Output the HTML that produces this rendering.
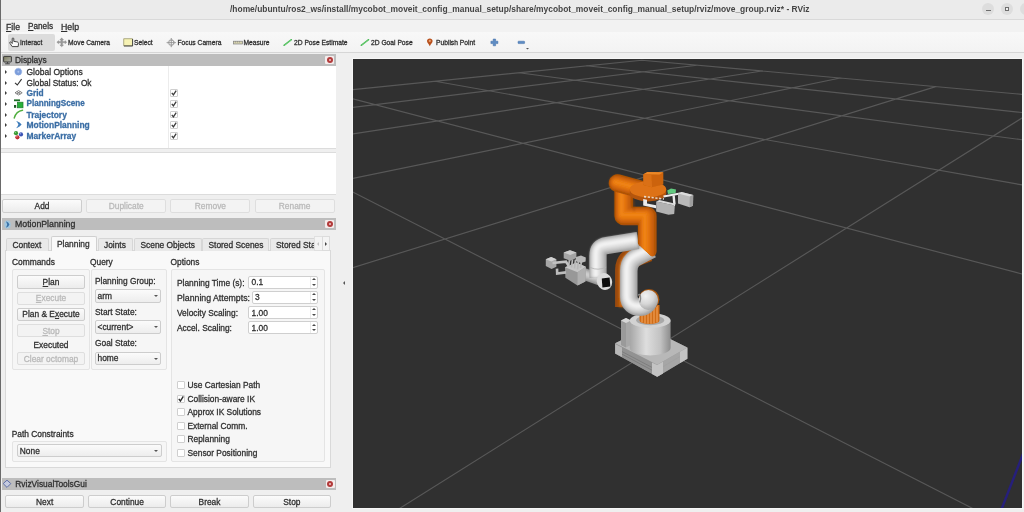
<!DOCTYPE html><html lang="en"><head><meta charset="utf-8"><title>RViz</title><style>
html,body{margin:0;padding:0}
body{width:1024px;height:512px;overflow:hidden;background:#efefef;position:relative;
 font-family:"Liberation Sans","DejaVu Sans",sans-serif;font-size:8.4px;color:#2f2f2f;line-height:1}
#root{position:absolute;left:0;top:0;width:1024px;height:512px;overflow:hidden;will-change:transform;transform:translateZ(0)}
.a{position:absolute;white-space:nowrap}
.t{position:absolute;white-space:nowrap;line-height:10px;height:10px;-webkit-text-stroke:0.28px currentColor}
.tb{font-size:6.7px}
.hdr{position:absolute;background:#bdbdbd;left:2px;width:334px}
.btn{position:absolute;box-sizing:border-box;border:1px solid #cdcdcd;border-radius:2px;
 background:linear-gradient(#fbfbfb,#ececec);text-align:center}
.btn.dis{color:#b9b9b9;background:#f3f3f3;border-color:#dedede}
.grp{position:absolute;box-sizing:border-box;border:1px solid #e4e4e4;border-radius:2px;background:#f6f6f6}
.inp{position:absolute;box-sizing:border-box;border:1px solid #cfcfcf;border-radius:2px;background:#fff}
.cmb{position:absolute;box-sizing:border-box;border:1px solid #cdcdcd;border-radius:2px;background:linear-gradient(#fbfbfb,#ededed)}
.cb{position:absolute;box-sizing:border-box;width:8px;height:8px;border:1px solid #cfcfcf;border-radius:1px;background:#fff}
.blue{color:#3b6ea5;font-weight:700}
.tab{position:absolute;box-sizing:border-box;border:1px solid #d6d6d6;border-bottom:none;background:#e9e9e9;border-radius:2px 2px 0 0}
.cls{position:absolute;width:9px;height:8px;background:#f4ecec;border-radius:1px}
.cls i{position:absolute;left:1.5px;top:1px;width:6px;height:6px;border-radius:3px;background:#b23a3a}
.cls b{position:absolute;left:3.5px;top:3px;width:2px;height:2px;border-radius:1px;background:#f1c9c9}
</style></head><body><div id="root">
<div class="a" style="left:0;top:0;width:1024px;height:19px;background:#ebebeb;border-bottom:1px solid #d9d9d9"></div>
<div class="t" style="left:230px;top:4.1px;font-weight:700;font-size:8.43px;color:#454545;-webkit-text-stroke:0">/home/ubuntu/ros2_ws/install/mycobot_moveit_config_manual_setup/share/mycobot_moveit_config_manual_setup/rviz/move_group.rviz* - RViz</div>
<div class="a" style="left:982px;top:3px;width:12px;height:12px;border-radius:6px;background:#dddddd"></div>
<div class="a" style="left:1001px;top:3px;width:12px;height:12px;border-radius:6px;background:#dddddd"></div>
<div class="a" style="left:1020px;top:3px;width:12px;height:12px;border-radius:6px;background:#dddddd"></div>
<div class="a" style="left:985.5px;top:10px;width:5px;height:1px;background:#6e6e6e"></div>
<div class="a" style="left:1004.5px;top:7px;width:4px;height:4px;border:1px solid #6e6e6e;box-sizing:border-box;background:#eee"></div>
<div class="a" style="left:0;top:20px;width:1024px;height:12px;background:#f2f2f2"></div>
<div class="t " style="left:6px;top:22.00px;font-size:8.7px"><u>F</u>ile</div>
<div class="t " style="left:28px;top:22.00px;font-size:8.2px"><u>P</u>anels</div>
<div class="t " style="left:61px;top:22.00px;font-size:8.75px"><u>H</u>elp</div>
<div class="a" style="left:0;top:32px;width:1024px;height:20px;background:linear-gradient(#f8f8f8,#f3f3f3);border-bottom:1px solid #d6d6d6"></div>
<div class="a" style="left:8px;top:34px;width:47px;height:17px;background:#dcdcdc;border-radius:2px"></div>
<div class="t tb" style="left:20px;top:37.60px;">Interact</div>
<div class="t tb" style="left:68px;top:37.60px;">Move Camera</div>
<div class="t tb" style="left:134px;top:37.60px;">Select</div>
<div class="t tb" style="left:177.5px;top:37.60px;">Focus Camera</div>
<div class="t tb" style="left:243.5px;top:37.60px;">Measure</div>
<div class="t tb" style="left:294px;top:37.60px;">2D Pose Estimate</div>
<div class="t tb" style="left:371px;top:37.60px;">2D Goal Pose</div>
<div class="t tb" style="left:436px;top:37.60px;">Publish Point</div>
<svg class="a" style="left:0;top:32px" width="540" height="21" viewBox="0 32 540 21">
<path d="M12.2 46.6 L10 43.4 C9.2 42.2 10.4 41.4 11.3 42.4 L12.2 43.5 L12.2 38.8 C12.2 37.6 13.8 37.6 13.8 38.8 L13.8 41.4 L16.8 41.8 C18 42 18.5 42.6 18.5 43.6 L18.2 46.6Z" fill="#fafafa" stroke="#333" stroke-width=".9" stroke-linejoin="round"/>
<path d="M61.7 37.8 L63.6 40 L62.5 40 L62.5 41.6 L65 41.6 L65 40.6 L66.8 42.2 L65 43.8 L65 42.8 L62.5 42.8 L62.5 45 L63.6 45 L61.7 46.8 L59.8 45 L60.9 45 L60.9 42.8 L58.6 42.8 L58.6 43.8 L56.8 42.2 L58.6 40.6 L58.6 41.6 L60.9 41.6 L60.9 40 L59.8 40Z" fill="#9a9a9a" stroke="#777" stroke-width=".3"/>
<rect x="123.8" y="38.8" width="8.6" height="7" fill="#f6f2b4" stroke="#8e8a5a" stroke-width=".7"/>
<path d="M124 46 L132.6 46 L132.6 39" fill="none" stroke="#3f3f3f" stroke-width=".9"/>
<g stroke="#8a8a8a" fill="none" stroke-width=".8"><circle cx="171.3" cy="42.6" r="2.6"/><path d="M171.3 38 V47.2 M166.7 42.6 H175.9"/><path d="M171.3 38.4 L175.5 42.6 L171.3 46.8 L167.1 42.6Z" stroke="#aaa" stroke-width=".5"/></g>
<rect x="233.4" y="41.2" width="9.2" height="2.8" fill="#d8d4b0" stroke="#808080" stroke-width=".7"/>
<path d="M235.5 41.2 v1.4 M237.5 41.2 v1.4 M239.5 41.2 v1.4" stroke="#777" stroke-width=".5"/>
<path d="M284 45.4 L291.4 39.6" stroke="#46b854" stroke-width="1.35" stroke-linecap="round"/>
<path d="M284.6 45.2 L291 40.2" stroke="#8fe08f" stroke-width=".5"/>
<path d="M361.2 45.4 L368.59999999999997 39.6" stroke="#46b854" stroke-width="1.35" stroke-linecap="round"/>
<path d="M361.8 45.2 L368.2 40.2" stroke="#8fe08f" stroke-width=".5"/>
<path d="M429.8 46.2 C428.6 43.4 427 42.6 427 40.9 C427 39.5 428.2 38.5 429.8 38.5 C431.4 38.5 432.6 39.5 432.6 40.9 C432.6 42.6 431 43.4 429.8 46.2Z" fill="#b8501c"/>
<circle cx="429.8" cy="40.9" r="1.1" fill="#e8a070"/>
<path d="M493.2 39 h2.4 v2.2 h2.3 v2.4 h-2.3 v2.2 h-2.4 v-2.2 h-2.3 v-2.4 h2.3Z" fill="#5e8cc4" stroke="#3c6aa4" stroke-width=".5"/>
<rect x="518" y="41.2" width="6.6" height="2.4" rx=".6" fill="#5e8cc4" stroke="#3c6aa4" stroke-width=".5"/>
<path d="M526 48 h3 l-1.5 1.6Z" fill="#555"/>
</svg>
<div class="a" style="left:0;top:0;width:1px;height:512px;background:#6a6a6a"></div>
<div class="hdr" style="top:54px;height:11.5px"></div>
<div class="t " style="left:15px;top:55.30px;">Displays</div>
<div class="cls" style="left:325px;top:55.5px"><i></i><b></b></div>
<div class="a" style="left:1px;top:65.5px;width:335px;height:82.5px;background:#fff;border-bottom:1px solid #dcdcdc"></div>
<div class="a" style="left:168px;top:66px;width:1px;height:82px;background:#ececec"></div>
<div class="t " style="left:26.5px;top:67.00px;font-size:8.5px">Global Options</div>
<div class="a" style="left:5.2px;top:70.0px;width:0;height:0;border-left:2.6px solid #3c3c3c;border-top:2px solid transparent;border-bottom:2px solid transparent"></div>
<div class="t " style="left:26.5px;top:77.70px;font-size:8.3px">Global Status: Ok</div>
<div class="a" style="left:5.2px;top:80.7px;width:0;height:0;border-left:2.6px solid #3c3c3c;border-top:2px solid transparent;border-bottom:2px solid transparent"></div>
<div class="t blue" style="left:26.5px;top:88.30px;font-size:8.35px">Grid</div>
<div class="a" style="left:5.2px;top:91.3px;width:0;height:0;border-left:2.6px solid #3c3c3c;border-top:2px solid transparent;border-bottom:2px solid transparent"></div>
<div class="cb" style="left:170px;top:89.3px;width:7.5px;height:7.5px"></div>
<svg class="a" style="left:170px;top:89.3px" width="8" height="8" viewBox="0 0 8 8"><path d="M1.8 3.8 L3.4 5.8 L6.2 1.6" fill="none" stroke="#3c3c3c" stroke-width="1.3"/></svg>
<div class="t blue" style="left:26.5px;top:99.10px;font-size:8.15px">PlanningScene</div>
<div class="a" style="left:5.2px;top:102.1px;width:0;height:0;border-left:2.6px solid #3c3c3c;border-top:2px solid transparent;border-bottom:2px solid transparent"></div>
<div class="cb" style="left:170px;top:100.1px;width:7.5px;height:7.5px"></div>
<svg class="a" style="left:170px;top:100.1px" width="8" height="8" viewBox="0 0 8 8"><path d="M1.8 3.8 L3.4 5.8 L6.2 1.6" fill="none" stroke="#3c3c3c" stroke-width="1.3"/></svg>
<div class="t blue" style="left:26.5px;top:109.80px;font-size:8.45px">Trajectory</div>
<div class="a" style="left:5.2px;top:112.8px;width:0;height:0;border-left:2.6px solid #3c3c3c;border-top:2px solid transparent;border-bottom:2px solid transparent"></div>
<div class="cb" style="left:170px;top:110.8px;width:7.5px;height:7.5px"></div>
<svg class="a" style="left:170px;top:110.8px" width="8" height="8" viewBox="0 0 8 8"><path d="M1.8 3.8 L3.4 5.8 L6.2 1.6" fill="none" stroke="#3c3c3c" stroke-width="1.3"/></svg>
<div class="t blue" style="left:26.5px;top:120.30px;font-size:8.45px">MotionPlanning</div>
<div class="a" style="left:5.2px;top:123.3px;width:0;height:0;border-left:2.6px solid #3c3c3c;border-top:2px solid transparent;border-bottom:2px solid transparent"></div>
<div class="cb" style="left:170px;top:121.3px;width:7.5px;height:7.5px"></div>
<svg class="a" style="left:170px;top:121.3px" width="8" height="8" viewBox="0 0 8 8"><path d="M1.8 3.8 L3.4 5.8 L6.2 1.6" fill="none" stroke="#3c3c3c" stroke-width="1.3"/></svg>
<div class="t blue" style="left:26.5px;top:131.00px;font-size:8.45px">MarkerArray</div>
<div class="a" style="left:5.2px;top:134.0px;width:0;height:0;border-left:2.6px solid #3c3c3c;border-top:2px solid transparent;border-bottom:2px solid transparent"></div>
<div class="cb" style="left:170px;top:132.0px;width:7.5px;height:7.5px"></div>
<svg class="a" style="left:170px;top:132.0px" width="8" height="8" viewBox="0 0 8 8"><path d="M1.8 3.8 L3.4 5.8 L6.2 1.6" fill="none" stroke="#3c3c3c" stroke-width="1.3"/></svg>
<svg class="a" style="left:0;top:54px" width="26" height="90" viewBox="0 54 26 90">
<defs><linearGradient id="mon" x1="0" y1="0" x2="1" y2="1"><stop offset="0" stop-color="#7a7a58"/><stop offset="1" stop-color="#b4b4b4"/></linearGradient></defs>
<rect x="3.6" y="56.4" width="7.8" height="5.6" rx=".6" fill="url(#mon)" stroke="#2e2e2e" stroke-width=".9"/>
<path d="M7.5 62.2 v1.2 M5.2 63.8 h4.6" stroke="#2e2e2e" stroke-width=".9"/>
<circle cx="18.3" cy="71.7" r="3.5" fill="#7d9edb"/><circle cx="18.3" cy="71.7" r="3.5" fill="none" stroke="#9bb5e6" stroke-width=".8" stroke-dasharray="1.1 1.1"/><circle cx="18.3" cy="71.7" r="1" fill="#a9c0ec"/>
<path d="M15 82.8 L17.3 85 L21.6 79.2" fill="none" stroke="#333" stroke-width="1.1"/>
<g stroke="#555" stroke-width=".7" fill="none"><path d="M15 92.8 L18.6 90.6 L22.2 92.8 L18.6 95 Z"/><path d="M16.8 91.7 L20.4 93.9 M20.4 91.7 L16.8 93.9"/></g>
<rect x="14" y="99.4" width="6" height="1.8" fill="#1d6a26"/>
<rect x="14" y="105" width="2.2" height="2.8" fill="#1d5a24"/>
<rect x="17.4" y="102.2" width="5.6" height="5.6" fill="#27b03a" stroke="#1c7a2a" stroke-width=".7"/>
<path d="M14.2 118 C15.5 113.5 18.5 110.8 22.6 110.2" fill="none" stroke="#4fae3e" stroke-width="1.4" stroke-linecap="round"/>
<path d="M16.6 121 L19.6 122.6 L21.6 124.6 L19.6 126.6 L16.6 128.2 L18.4 124.6Z" fill="#3e7cba"/>
<path d="M16.4 121.2 L17.6 122.4 M16.4 128 L17.6 126.8" stroke="#7fb0dc" stroke-width=".7"/>
<circle cx="16" cy="133.2" r="2.1" fill="#3a9a34"/><circle cx="21" cy="134.4" r="2.1" fill="#3a52b4"/><circle cx="17.4" cy="137.3" r="2.1" fill="#c02a34"/>
<circle cx="15.5" cy="132.6" r=".7" fill="#8fd48a"/><circle cx="20.5" cy="133.8" r=".7" fill="#8fa0e4"/><circle cx="16.9" cy="136.7" r=".7" fill="#f08a92"/>
</svg>
<div class="a" style="left:1px;top:151.5px;width:335px;height:43.5px;background:#fff;border-top:1px solid #dcdcdc;border-bottom:1px solid #dcdcdc;box-sizing:border-box"></div>
<div class="btn " style="left:2.0px;top:199px;width:80px;height:13.5px"></div>
<div class="t " style="left:2.00px;width:80px;text-align:center;top:201.00px;">Add</div>
<div class="btn dis" style="left:86.2px;top:199px;width:80px;height:13.5px"></div>
<div class="t " style="left:86.20px;width:80px;text-align:center;top:201.00px;color:#b9b9b9">Duplicate</div>
<div class="btn dis" style="left:170.4px;top:199px;width:80px;height:13.5px"></div>
<div class="t " style="left:170.40px;width:80px;text-align:center;top:201.00px;color:#b9b9b9">Remove</div>
<div class="btn dis" style="left:254.6px;top:199px;width:80px;height:13.5px"></div>
<div class="t " style="left:254.60px;width:80px;text-align:center;top:201.00px;color:#b9b9b9">Rename</div>
<div class="hdr" style="top:218px;height:11.5px"></div>
<div class="t " style="left:15px;top:219.40px;font-size:8.75px">MotionPlanning</div>
<svg class="a" style="left:3px;top:219px" width="10" height="11" viewBox="3 219 10 11"><ellipse cx="7.5" cy="224.5" rx="3.2" ry="4" fill="#9cc8e4" opacity=".85"/><path d="M6 221.2 L8.2 222.6 L9.4 224.5 L8.2 226.4 L6 227.8 L7.2 224.5Z" fill="#3a72a8"/></svg>
<div class="cls" style="left:325px;top:220px"><i></i><b></b></div>
<div class="a" style="left:5px;top:250px;width:326px;height:218px;box-sizing:border-box;border:1px solid #d9d9d9;background:#f9f9f9"></div>
<div class="tab" style="left:6px;top:237.5px;width:43px;height:13px;overflow:hidden"></div>
<div class="tab" style="left:97.5px;top:237.5px;width:35.5px;height:13px;overflow:hidden"></div>
<div class="tab" style="left:134px;top:237.5px;width:67.5px;height:13px;overflow:hidden"></div>
<div class="tab" style="left:202px;top:237.5px;width:66.5px;height:13px;overflow:hidden"></div>
<div class="tab" style="left:270px;top:237.5px;width:50px;height:13px;overflow:hidden"></div>
<div class="t " style="left:12.5px;top:239.50px;">Context</div>
<div class="t " style="left:104px;top:239.50px;">Joints</div>
<div class="t " style="left:140.5px;top:239.50px;">Scene Objects</div>
<div class="t " style="left:208.5px;top:239.50px;">Stored Scenes</div>
<div class="a" style="left:276px;top:239.5px;width:37.5px;height:10px;overflow:hidden"><div class="t" style="left:0;top:0">Stored States</div></div>
<div class="tab" style="left:51px;top:235.5px;width:45.5px;height:15.5px;background:#f9f9f9;border-color:#d0d0d0"></div>
<div class="t " style="left:57px;top:238.80px;">Planning</div>
<div class="a" style="left:313.5px;top:236px;width:9px;height:15px;background:#f4f4f4;border:1px solid #e0e0e0;box-sizing:border-box"></div>
<div class="a" style="left:322px;top:236px;width:8px;height:15px;background:#f4f4f4;border:1px solid #dcdcdc;box-sizing:border-box"></div>
<div class="a" style="left:316.5px;top:242px;width:0;height:0;border-right:2.5px solid #c4c4c4;border-top:2px solid transparent;border-bottom:2px solid transparent"></div>
<div class="a" style="left:325px;top:242px;width:0;height:0;border-left:2.5px solid #444;border-top:2px solid transparent;border-bottom:2px solid transparent"></div>
<div class="t " style="left:12px;top:257.00px;">Commands</div>
<div class="t " style="left:90px;top:257.00px;">Query</div>
<div class="t " style="left:170.6px;top:257.00px;">Options</div>
<div class="grp" style="left:12px;top:269px;width:77.5px;height:101px"></div>
<div class="grp" style="left:90.5px;top:269px;width:76px;height:101px"></div>
<div class="grp" style="left:170.5px;top:269px;width:154.5px;height:193px"></div>
<div class="grp" style="left:12px;top:440.8px;width:154.5px;height:21.5px"></div>
<div class="btn " style="left:16.8px;top:275.3px;width:68.4px;height:13.4px"></div>
<div class="t " style="left:16.00px;width:70px;text-align:center;top:277.10px;"><u>P</u>lan</div>
<div class="btn dis" style="left:16.8px;top:291.5px;width:68.4px;height:13.4px"></div>
<div class="t " style="left:16.00px;width:70px;text-align:center;top:293.30px;color:#b9b9b9"><u>E</u>xecute</div>
<div class="btn " style="left:16.8px;top:307.6px;width:68.4px;height:13.4px"></div>
<div class="t " style="left:16.00px;width:70px;text-align:center;top:309.40px;">Plan &amp; E<u>x</u>ecute</div>
<div class="btn dis" style="left:16.8px;top:324px;width:68.4px;height:13.4px"></div>
<div class="t " style="left:16.00px;width:70px;text-align:center;top:325.80px;color:#b9b9b9"><u>S</u>top</div>
<div class="btn dis" style="left:16.8px;top:352px;width:68.4px;height:13.4px"></div>
<div class="t " style="left:16.00px;width:70px;text-align:center;top:353.80px;color:#b9b9b9">Clear octomap</div>
<div class="t " style="left:16.00px;width:70px;text-align:center;top:339.70px;">Executed</div>
<div class="t " style="left:95px;top:275.70px;">Planning Group:</div>
<div class="t " style="left:95px;top:307.00px;">Start State:</div>
<div class="t " style="left:95px;top:338.00px;">Goal State:</div>
<div class="cmb" style="left:94.8px;top:289.2px;width:66.6px;height:13.4px"></div>
<div class="t " style="left:97.5px;top:290.80px;">arm</div>
<div class="a" style="left:153.5px;top:295.2px;width:0;height:0;border-top:2.2px solid #555;border-left:2px solid transparent;border-right:2px solid transparent"></div>
<div class="cmb" style="left:94.8px;top:320.4px;width:66.6px;height:13.4px"></div>
<div class="t " style="left:97.5px;top:322.00px;">&lt;current&gt;</div>
<div class="a" style="left:153.5px;top:326.4px;width:0;height:0;border-top:2.2px solid #555;border-left:2px solid transparent;border-right:2px solid transparent"></div>
<div class="cmb" style="left:94.8px;top:351.6px;width:66.6px;height:13.4px"></div>
<div class="t " style="left:97.5px;top:353.20px;">home</div>
<div class="a" style="left:153.5px;top:357.6px;width:0;height:0;border-top:2.2px solid #555;border-left:2px solid transparent;border-right:2px solid transparent"></div>
<div class="t " style="left:177px;top:277.50px;">Planning Time (s):</div>
<div class="inp" style="left:248px;top:275.5px;width:69.8px;height:13px"></div>
<div class="t " style="left:251.5px;top:277.30px;">0.1</div>
<div class="a" style="left:309.5px;top:276.5px;width:1px;height:11px;background:#ececec"></div>
<div class="a" style="left:311.6px;top:278.1px;width:0;height:0;border-bottom:2.4px solid #4a4a4a;border-left:2px solid transparent;border-right:2px solid transparent"></div>
<div class="a" style="left:311.6px;top:283.5px;width:0;height:0;border-top:2.4px solid #4a4a4a;border-left:2px solid transparent;border-right:2px solid transparent"></div>
<div class="t " style="left:177px;top:292.50px;font-size:8.75px">Planning Attempts:</div>
<div class="inp" style="left:251.5px;top:290.6px;width:66.3px;height:13px"></div>
<div class="t " style="left:255.0px;top:292.40px;">3</div>
<div class="a" style="left:309.5px;top:291.6px;width:1px;height:11px;background:#ececec"></div>
<div class="a" style="left:311.6px;top:293.2px;width:0;height:0;border-bottom:2.4px solid #4a4a4a;border-left:2px solid transparent;border-right:2px solid transparent"></div>
<div class="a" style="left:311.6px;top:298.6px;width:0;height:0;border-top:2.4px solid #4a4a4a;border-left:2px solid transparent;border-right:2px solid transparent"></div>
<div class="t " style="left:177px;top:307.80px;">Velocity Scaling:</div>
<div class="inp" style="left:248px;top:305.8px;width:69.8px;height:13px"></div>
<div class="t " style="left:251.5px;top:307.60px;">1.00</div>
<div class="a" style="left:309.5px;top:306.8px;width:1px;height:11px;background:#ececec"></div>
<div class="a" style="left:311.6px;top:308.4px;width:0;height:0;border-bottom:2.4px solid #4a4a4a;border-left:2px solid transparent;border-right:2px solid transparent"></div>
<div class="a" style="left:311.6px;top:313.8px;width:0;height:0;border-top:2.4px solid #4a4a4a;border-left:2px solid transparent;border-right:2px solid transparent"></div>
<div class="t " style="left:177px;top:323.00px;">Accel. Scaling:</div>
<div class="inp" style="left:248px;top:321px;width:69.8px;height:13px"></div>
<div class="t " style="left:251.5px;top:322.80px;">1.00</div>
<div class="a" style="left:309.5px;top:322.0px;width:1px;height:11px;background:#ececec"></div>
<div class="a" style="left:311.6px;top:323.6px;width:0;height:0;border-bottom:2.4px solid #4a4a4a;border-left:2px solid transparent;border-right:2px solid transparent"></div>
<div class="a" style="left:311.6px;top:329.0px;width:0;height:0;border-top:2.4px solid #4a4a4a;border-left:2px solid transparent;border-right:2px solid transparent"></div>
<div class="cb" style="left:177.2px;top:380.7px"></div>
<div class="t " style="left:187.5px;top:379.70px;">Use Cartesian Path</div>
<div class="cb" style="left:177.2px;top:394.8px"></div>
<svg class="a" style="left:177.2px;top:394.8px" width="8" height="8" viewBox="0 0 8 8"><path d="M1.8 3.9 L3.4 6 L6.3 1.4" fill="none" stroke="#2c2c2c" stroke-width="1.4"/></svg>
<div class="t " style="left:187.5px;top:393.80px;">Collision-aware IK</div>
<div class="cb" style="left:177.2px;top:408.2px"></div>
<div class="t " style="left:187.5px;top:407.20px;">Approx IK Solutions</div>
<div class="cb" style="left:177.2px;top:421.7px"></div>
<div class="t " style="left:187.5px;top:420.70px;">External Comm.</div>
<div class="cb" style="left:177.2px;top:435.0px"></div>
<div class="t " style="left:187.5px;top:434.00px;">Replanning</div>
<div class="cb" style="left:177.2px;top:448.6px"></div>
<div class="t " style="left:187.5px;top:447.60px;">Sensor Positioning</div>
<div class="t " style="left:11.7px;top:429.00px;">Path Constraints</div>
<div class="cmb" style="left:16.5px;top:444.3px;width:145px;height:13.2px"></div>
<div class="t " style="left:19.8px;top:446.00px;">None</div>
<div class="a" style="left:153.5px;top:450.3px;width:0;height:0;border-top:2.2px solid #555;border-left:2px solid transparent;border-right:2px solid transparent"></div>
<div class="hdr" style="top:477.5px;height:12px"></div>
<div class="t " style="left:15.3px;top:478.80px;">RvizVisualToolsGui</div>
<svg class="a" style="left:2px;top:478px" width="11" height="11" viewBox="2 478 11 11"><path d="M3.2 483.6 L7 480.2 L10.8 483.6 L7 487.4Z" fill="#c5cbe0" stroke="#5f6fa8" stroke-width="1"/></svg>
<div class="cls" style="left:325.5px;top:480px"><i></i><b></b></div>
<div class="btn" style="left:5.4px;top:495px;width:78.6px;height:13.4px"></div>
<div class="t " style="left:5.70px;width:78px;text-align:center;top:496.80px;">Next</div>
<div class="btn" style="left:87.8px;top:495px;width:78.6px;height:13.4px"></div>
<div class="t " style="left:88.10px;width:78px;text-align:center;top:496.80px;">Continue</div>
<div class="btn" style="left:170.2px;top:495px;width:78.6px;height:13.4px"></div>
<div class="t " style="left:170.50px;width:78px;text-align:center;top:496.80px;">Break</div>
<div class="btn" style="left:252.6px;top:495px;width:78.6px;height:13.4px"></div>
<div class="t " style="left:252.90px;width:78px;text-align:center;top:496.80px;">Stop</div>
<div class="a" style="left:342.5px;top:281px;width:0;height:0;border-right:2.5px solid #555;border-top:2px solid transparent;border-bottom:2px solid transparent"></div>
<div class="a" style="left:352px;top:58px;width:671px;height:451px;background:#f6f6f6"></div>
<svg class="a" style="left:353px;top:59px" width="669" height="449" viewBox="0 0 669 449">
<defs>
<linearGradient id="gw" x1="0" x2="1" y1="0" y2="0"><stop offset="0" stop-color="#b9b9b9"/><stop offset=".35" stop-color="#f4f4f4"/><stop offset=".7" stop-color="#dcdcdc"/><stop offset="1" stop-color="#a8a8a8"/></linearGradient>
<linearGradient id="go" x1="0" x2="1" y1="0" y2="0"><stop offset="0" stop-color="#c8600a"/><stop offset=".4" stop-color="#f08018"/><stop offset="1" stop-color="#c05a08"/></linearGradient>
<linearGradient id="gcyl" x1="0" x2="1" y1="0" y2="0"><stop offset="0" stop-color="#a6a6a6"/><stop offset=".4" stop-color="#dedede"/><stop offset=".75" stop-color="#c2c2c2"/><stop offset="1" stop-color="#8c8c8c"/></linearGradient>
<filter id="b0" filterUnits="userSpaceOnUse" x="-400" y="-100" width="1600" height="800"><feGaussianBlur stdDeviation="0.45"/></filter><filter id="b1" filterUnits="userSpaceOnUse" x="0" y="0" width="1200" height="700"><feGaussianBlur stdDeviation="1.1"/></filter>
<radialGradient id="globe" cx=".36" cy=".3" r=".75"><stop offset="0" stop-color="#f2f2f2"/><stop offset=".55" stop-color="#d6d6d6"/><stop offset="1" stop-color="#a4a4a4"/></radialGradient>
</defs>

<rect width="669" height="449" fill="#303030"/>
<path d="M-4477.1 486.8L288.8 1.2M-4477.1 486.8L-44303.4 5779.8M-15308.0 1926.2L344.0 6.2M-2035.8 238.1L-35867.1 6276.3M-35075.3 5472.5L409.1 12.0M-1128.4 145.6L-21178.1 5573.4M-28079.2 5903.6L487.3 19.0M-654.8 97.3L-11321.0 6031.5M-19949.5 6404.6L582.7 27.6M-364.0 67.7L199.7 6567.0M-7993.7 5493.0L702.0 38.3M-167.2 47.7L11114.9 5807.8M986.2 5923.5L855.1 52.0M-25.2 33.2L23905.9 6300.4M11413.2 6423.3L1059.0 70.3M82.1 22.3L38935.7 6879.2M18833.4 5513.3L1344.0 95.9M166.0 13.7L7880.2 1042.0M29758.2 5943.1L1770.4 134.2M233.4 6.8L3492.7 356.3M42433.9 6441.8L2477.9 197.7M288.8 1.2L2477.9 197.7" stroke="#666666" stroke-width="1.15" fill="none" opacity="0.75"/>
<path d="M670 395 L648.2 451" stroke="#261f7c" stroke-width="2.4" fill="none"/>
<g transform="translate(-353,-59)" filter="url(#b0)">
<path d="M615.2 343.2 L647 327.5 L687.3 347.5 L687.3 358.7 L657.2 376.7 L615.2 353.5Z" fill="#8c8c8c"/>
<path d="M615.2 343.2 L657.2 364.7 L657.2 376.7 L615.2 353.5Z" fill="#929292"/>
<path d="M657.2 364.7 L687.3 347.5 L687.3 358.7 L657.2 376.7Z" fill="#a6a6a6"/>
<path d="M615.2 343.2 L647 327.5 L687.3 347.5 L657.2 364.7Z" fill="#b8b8b8"/>
<path d="M618 349.5 L655 369 M618 352 L655 371.8" stroke="#7c7c7c" stroke-width=".9" fill="none"/>
<path d="M660 368.5 L685 353.5" stroke="#a2a2a2" stroke-width=".9" fill="none"/>
<path d="M615.2 344 L622 347.5 L622 357 L615.2 353.5Z" fill="#b8b8b8"/>
<path d="M652 362.5 L657.2 364.9 L663 361.8 L663 373.4 L657.2 376.7 L652 374Z" fill="#c4c4c4"/>
<path d="M680 351.8 L687.3 347.7 L687.3 358.7 L680 363Z" fill="#c4c4c4"/>
<path d="M621 320.5 L626 318 L631 320.5 L631 345 L626 347.5 L621 345Z" fill="#a8a8a8"/>
<path d="M621 320.5 L626 323 L626 347.5 L621 345Z" fill="#9a9a9a"/>
<path d="M621 320.5 L626 318 L631 320.5 L626 323Z" fill="#d6d6d6"/>
<path d="M629.8 320.5 L629.8 348 A20.4 7.4 0 0 0 670.6 348 L670.6 320.5Z" fill="url(#gcyl)"/>
<ellipse cx="650.2" cy="320.5" rx="20.4" ry="7.4" fill="#d2d2d2"/>
<ellipse cx="650.2" cy="320.3" rx="14" ry="5" fill="#a8a8a8"/>
<path d="M639.5 305 L639.5 320.4 A10 3.6 0 0 0 659.5 320.4 L659.5 305Z" fill="#cf6c18"/>
<path d="M642 306 V322.4 M645 306 V323.4 M648 306 V323.8 M651 306 V323.8 M654 306 V323.4 M657 306 V322.4" stroke="#f3a25a" stroke-width="1.1" fill="none"/>
<path d="M648 251.5 C640 255 625.6 256 625.6 270 L625.6 307" transform="translate(0,0)" fill="none" stroke="#9a4a0a" stroke-width="21.00" stroke-linecap="butt" stroke-linejoin="round"/>
<path d="M648 251.5 C640 255 625.6 256 625.6 270 L625.6 307" transform="translate(0.8,0)" fill="none" stroke="#c86410" stroke-width="15.12" stroke-linecap="butt" stroke-linejoin="round" filter="url(#b1)"/>
<ellipse cx="649" cy="299.4" rx="10.4" ry="10.4" fill="#a85610"/>
<path d="M652 249.5 L645 253 C637 257 628.8 259 628.8 271 L628.8 297 C629 310 649 310.5 649 299" transform="translate(0,0)" fill="none" stroke="#9e9e9e" stroke-width="17.40" stroke-linecap="butt" stroke-linejoin="round"/>
<path d="M652 249.5 L645 253 C637 257 628.8 259 628.8 271 L628.8 297 C629 310 649 310.5 649 299" transform="translate(-0.7,-0.4)" fill="none" stroke="#c4c4c4" stroke-width="14.62" stroke-linecap="butt" stroke-linejoin="round" filter="url(#b1)"/>
<path d="M652 249.5 L645 253 C637 257 628.8 259 628.8 271 L628.8 297 C629 310 649 310.5 649 299" transform="translate(-1.5,-0.8)" fill="none" stroke="#dedede" stroke-width="9.57" stroke-linecap="butt" stroke-linejoin="round" filter="url(#b1)"/>
<path d="M652 249.5 L645 253 C637 257 628.8 259 628.8 271 L628.8 297 C629 310 649 310.5 649 299" transform="translate(-2.2,-1.2)" fill="none" stroke="#f2f2f2" stroke-width="4.35" stroke-linecap="butt" stroke-linejoin="round" filter="url(#b1)"/>
<ellipse cx="648.4" cy="300" rx="9.7" ry="9.9" fill="url(#globe)"/>
<path d="M638.2 295.5 C640.2 292 641.6 297.5 639.8 302.5" stroke="#8a8a8a" stroke-width="1.3" fill="none"/>
<path d="M601 280 L584 274" transform="translate(0,0)" fill="none" stroke="#8f8f8f" stroke-width="11.50" stroke-linecap="round" stroke-linejoin="round"/>
<path d="M601 280 L584 274" transform="translate(-0.5,-0.4)" fill="none" stroke="#b4b4b4" stroke-width="9.20" stroke-linecap="round" stroke-linejoin="round" filter="url(#b1)"/>
<path d="M601 280 L584 274" transform="translate(-1,-0.8)" fill="none" stroke="#cfcfcf" stroke-width="4.60" stroke-linecap="round" stroke-linejoin="round" filter="url(#b1)"/>
<path d="M565 267.2 L576.5 262.6 L585.8 266.8 L585.4 281.5 L577.5 285.6 L565.4 277.8Z" fill="#989898"/>
<path d="M565 267.2 L576.5 262.6 L585.8 266.8 L577.6 272.2Z" fill="#c6c6c6"/>
<path d="M577.6 272.2 L585.8 266.8 L585.4 281.5 L577.5 285.6Z" fill="#b0b0b0"/>
<path d="M568.5 266.5 L569.5 260 M571.5 267.5 L572.5 259.5 M574.5 268.5 L575.5 259.5 M577.5 269.5 L578.5 260 M580.5 268 L581.5 260.5" stroke="#b8b8b8" stroke-width="1.7" fill="none"/>
<path d="M563.7 252.6 L570 250.2 L576.4 252.4 L576.4 258 L570.4 260.8 L563.7 258.2Z" fill="#a4a4a4"/>
<path d="M563.7 252.6 L570 250.2 L576.4 252.4 L570.2 255Z" fill="#cccccc"/>
<path d="M576 257 L581 255.6 L585.8 257.4 L585.6 261.6 L580.8 263 L576 261.2Z" fill="#b8b8b8"/>
<path d="M545.8 259.2 L551.2 257 L556.4 259.2 L556.4 266.8 L551.6 269 L545.8 266Z" fill="#a6a6a6"/>
<path d="M545.8 259.2 L551.2 257 L556.4 259.2 L551.4 261.6Z" fill="#d0d0d0"/>
<path d="M552.5 263 L566 261.6 L568.5 265.6" stroke="#c2c2c2" stroke-width="2.6" fill="none"/>
<path d="M557 268.6 L557.2 273.6 L566 272.4" stroke="#bcbcbc" stroke-width="2.6" fill="none"/>
<path d="M638 240.6 L607 245.4 C599.5 246.6 598 250 598 256 L598 278" transform="translate(0,0)" fill="none" stroke="#9e9e9e" stroke-width="17.20" stroke-linecap="butt" stroke-linejoin="round"/>
<path d="M638 240.6 L607 245.4 C599.5 246.6 598 250 598 256 L598 278" transform="translate(-0.7,-0.4)" fill="none" stroke="#c4c4c4" stroke-width="14.45" stroke-linecap="butt" stroke-linejoin="round" filter="url(#b1)"/>
<path d="M638 240.6 L607 245.4 C599.5 246.6 598 250 598 256 L598 278" transform="translate(-1.5,-0.8)" fill="none" stroke="#dedede" stroke-width="9.46" stroke-linecap="butt" stroke-linejoin="round" filter="url(#b1)"/>
<path d="M638 240.6 L607 245.4 C599.5 246.6 598 250 598 256 L598 278" transform="translate(-2.2,-1.2)" fill="none" stroke="#f2f2f2" stroke-width="4.30" stroke-linecap="butt" stroke-linejoin="round" filter="url(#b1)"/>
<ellipse cx="604.5" cy="281.5" rx="7.6" ry="8.6" transform="rotate(-20 604.5 281.5)" fill="#dcdcdc"/>
<path d="M601.8 278.5 L609.6 277.6 L610.3 286.6 L602.4 287.6Z" fill="#0c0c0c"/>
<path d="M590.2 267.5 Q598 271 606.2 267.2" stroke="#b0b0b0" stroke-width=".8" fill="none"/>
<clipPath id="cj"><path d="M600 208.4 L650.5 255.4 Q654.8 258.6 657.2 251 L700 251 L700 100 L600 100Z"/></clipPath>
<g clip-path="url(#cj)">
<path d="M647.3 268 L647.3 216 L623.8 216 L623.8 188" transform="translate(0,0)" fill="none" stroke="#a64e08" stroke-width="18.70" stroke-linecap="butt" stroke-linejoin="round"/>
<path d="M647.3 268 L647.3 216 L623.8 216 L623.8 188" transform="translate(-0.7,-0.4)" fill="none" stroke="#cc620c" stroke-width="15.33" stroke-linecap="butt" stroke-linejoin="round" filter="url(#b1)"/>
<path d="M647.3 268 L647.3 216 L623.8 216 L623.8 188" transform="translate(-1.6,-0.8)" fill="none" stroke="#e4740e" stroke-width="9.35" stroke-linecap="butt" stroke-linejoin="round" filter="url(#b1)"/>
<path d="M647.3 268 L647.3 216 L623.8 216 L623.8 188" transform="translate(-2.4,-1.2)" fill="none" stroke="#f08416" stroke-width="3.74" stroke-linecap="butt" stroke-linejoin="round" filter="url(#b1)"/>
</g>
<path d="M633 199 L634.2 211" stroke="#9a4806" stroke-width="1.2" fill="none" opacity=".7" filter="url(#b1)"/>
<path d="M617.6 183.2 L641 189.5" transform="translate(0,0)" fill="none" stroke="#a64e08" stroke-width="17.80" stroke-linecap="round" stroke-linejoin="round"/>
<path d="M617.6 183.2 L641 189.5" transform="translate(-0.7,-0.4)" fill="none" stroke="#cc620c" stroke-width="14.60" stroke-linecap="round" stroke-linejoin="round" filter="url(#b1)"/>
<path d="M617.6 183.2 L641 189.5" transform="translate(-1.6,-0.8)" fill="none" stroke="#e4740e" stroke-width="8.90" stroke-linecap="round" stroke-linejoin="round" filter="url(#b1)"/>
<path d="M617.6 183.2 L641 189.5" transform="translate(-2.4,-1.2)" fill="none" stroke="#f08416" stroke-width="3.56" stroke-linecap="round" stroke-linejoin="round" filter="url(#b1)"/>
<ellipse cx="648" cy="193.4" rx="18.2" ry="8" fill="#b4540a"/>
<rect x="629.8" y="189.4" width="36.4" height="4" fill="#b4540a"/>
<ellipse cx="648" cy="189.4" rx="18.2" ry="8" fill="#de7214"/>
<path d="M643.4 174.2 L647.5 172 L663.3 172.2 L663.3 184.6 L652 187.2 L643.4 185Z" fill="#cc640e"/>
<path d="M643.4 174.2 L647.5 172 L663.3 172.2 L659.5 174.6Z" fill="#ec8828"/>
<path d="M643.4 174.2 L651.5 174.5 L652 187.2 L643.4 185Z" fill="#da7014"/>
<path d="M667.2 190.5 L671 188.6 L676 189.6 L675.6 193.2 L668 194Z" fill="#62c980"/>
<path d="M643.2 199 L647 199.7 L647 203.6 L656 205.3 L656 208.2 L643.2 205.6Z" fill="#ececec"/>
<path d="M644 196.6 L664 199" stroke="#e8d8c8" stroke-width="1.6" stroke-dasharray="2.2 1.6" fill="none"/>
<path d="M663.5 196.4 L680 193.6" stroke="#efefef" stroke-width="2" fill="none"/>
<path d="M673.6 195.4 L674.4 204" stroke="#ebebeb" stroke-width="2.4" fill="none"/>
<path d="M656.2 201.5 L672.5 205 L674.8 206.5 L674.2 214 L668.5 214.8 L656.2 211.5Z" fill="#b2b2b2"/>
<path d="M656.2 201.5 L659.5 200 L675.5 203.8 L674.8 206.5 L672.5 205Z" fill="#dadada"/>
<path d="M678 193.5 L681.5 192 L693.2 195 L693 205.8 L689.5 207.2 L678 203.5Z" fill="#b9b9b9"/>
<path d="M678 193.5 L681.5 192 L693.2 195 L689.8 196.6Z" fill="#dddddd"/>
<path d="M689.8 196.6 L693.2 195 L693 205.8 L689.5 207.2Z" fill="#9e9e9e"/>
</g>
</svg>
</div></body></html>
